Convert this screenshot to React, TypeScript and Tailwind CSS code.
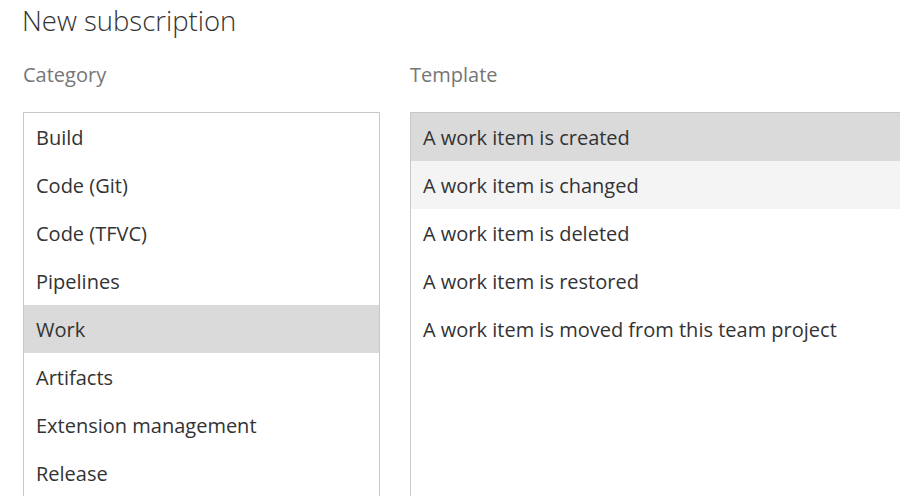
const categories = [
  'Build',
  'Code (Git)',
  'Code (TFVC)',
  'Pipelines',
  'Work',
  'Artifacts',
  'Extension management',
  'Release',
];

const templates = [
  'A work item is created',
  'A work item is changed',
  'A work item is deleted',
  'A work item is restored',
  'A work item is moved from this team project',
];

export default function App() {
  return (
    <div className="h-[496px] w-[900px] overflow-hidden bg-white text-[#333333] [font-family:'Segoe_UI','Open_Sans',sans-serif]">
      <h1 className="pl-[22px] pt-[1px] text-[27.5px] font-light leading-[40px]">New subscription</h1>

      <div className="mt-[16px] flex">
        {/* Category column */}
        <div className="ml-[23px] w-[357px] shrink-0">
          <div className="h-[36px] text-[20px] leading-[36px] text-[#767676]">Category</div>
          <div className="mt-[19px] h-[400px] border border-[#c8c8c8]">
            {categories.map((c) => (
              <div
                key={c}
                className={`h-[48px] pl-[12px] pt-[1px] text-[20px] leading-[47px] ${c === 'Work' ? 'bg-[#dadada]' : ''}`}
              >
                {c}
              </div>
            ))}
          </div>
        </div>

        {/* Template column */}
        <div className="ml-[30px] w-[520px] shrink-0">
          <div className="h-[36px] text-[20px] leading-[36px] text-[#767676]">Template</div>
          <div className="mt-[19px] h-[400px] border-l border-t border-[#c8c8c8]">
            {templates.map((t, i) => (
              <div
                key={t}
                className={`h-[48px] pl-[12px] pt-[1px] text-[20px] leading-[47px] ${
                  i === 0 ? 'bg-[#dadada]' : i === 1 ? 'bg-[#f4f4f4]' : ''
                }`}
              >
                {t}
              </div>
            ))}
          </div>
        </div>
      </div>
    </div>
  );
}
